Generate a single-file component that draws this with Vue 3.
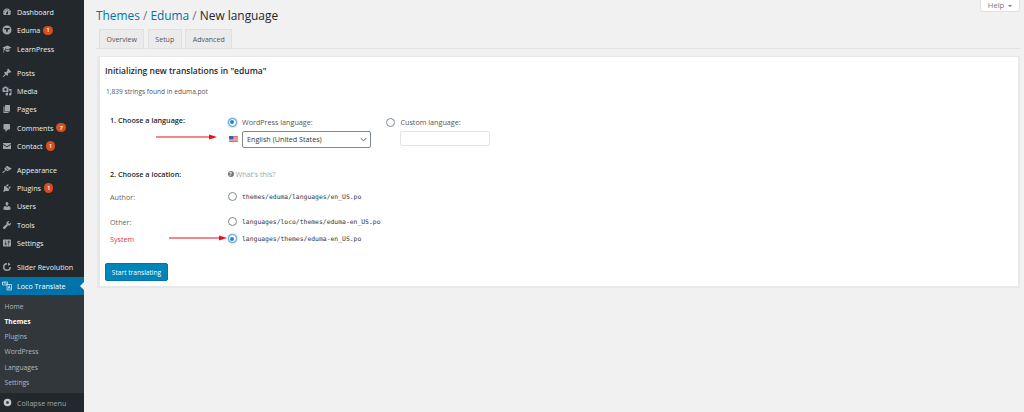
<script setup>
const P = {
  dash: 'M3.76 16h12.48c1.1-1.37 1.76-3.11 1.76-5 0-4.42-3.58-8-8-8s-8 3.58-8 8c0 1.89.66 3.63 1.76 5zM10 4c.55 0 1 .45 1 1s-.45 1-1 1-1-.45-1-1 .45-1 1-1zM6 6c.55 0 1 .45 1 1s-.45 1-1 1-1-.45-1-1 .45-1 1-1zm8 0c.55 0 1 .45 1 1s-.45 1-1 1-1-.45-1-1 .45-1 1-1zm-5.37 5.55L12 7v6c0 1.1-.9 2-2 2s-2-.9-2-2c0-.57.24-1.08.63-1.45zM4 10c.55 0 1 .45 1 1s-.45 1-1 1-1-.45-1-1 .45-1 1-1zm12 0c.55 0 1 .45 1 1s-.45 1-1 1-1-.45-1-1 .45-1 1-1z',
  eduma: 'M10 1a9 9 0 1 0 0 18 9 9 0 0 0 0-18zM4 6h12l-1 3h-3l-1 5-2 1-1-6H5z',
  learn: 'M1 7l10-4 8 4-8 4-5-2.3V12l-2 1 .4 4H2.6L3 13V8zM7 10.5l4 2 4-2V14c-2 2-6 2-8 0z',
  post: 'M10.44 3.02l1.82-1.82 6.36 6.35-1.83 1.82c-1.05-.68-2.48-.57-3.41.36l-.75.75c-.92.93-1.04 2.35-.35 3.41l-1.83 1.82-2.41-2.41-2.8 2.79c-.42.42-3.38 2.71-3.8 2.29s1.86-3.39 2.28-3.81l2.79-2.79L4.1 9.36l1.83-1.82c1.05.69 2.48.57 3.4-.36l.75-.75c.93-.92 1.05-2.35.36-3.41z',
  media: 'M13 11V4c0-.55-.45-1-1-1h-1.67L9 1H5L3.67 3H2c-.55 0-1 .45-1 1v7c0 .55.45 1 1 1h10c.55 0 1-.45 1-1zM7 4.5c1.38 0 2.5 1.12 2.5 2.5S8.38 9.5 7 9.5 4.5 8.38 4.5 7 5.62 4.5 7 4.5zM14 6h5v10.5c0 1.38-1.12 2.5-2.5 2.5S14 17.88 14 16.5s1.12-2.5 2.5-2.5c.17 0 .34.02.5.05V9h-3V6zm-4 8.05V13h2v3.5c0 1.38-1.12 2.5-2.5 2.5S7 17.88 7 16.5 8.12 14 9.5 14c.17 0 .34.02.5.05z',
  page: 'M6 15V2h10v13H6zm-1 1h8v2H3V5h2v11z',
  comment: 'M5 2h9c1.1 0 2 .9 2 2v7c0 1.1-.9 2-2 2h-2l-5 5v-5H5c-1.1 0-2-.9-2-2V4c0-1.1.9-2 2-2z',
  mail: 'M2 4h16v1.8l-8 4.7-8-4.7zM2 7.6l8 4.7 8-4.7V16H2z',
  brush: 'M14.48 11.06L7.41 3.99l1.5-1.5c.5-.56 2.3-.47 3.51.32 1.21.8 1.43 1.28 2.91 2.1 1.18.64 2.45 1.26 4.45.85zm-.71.71L6.7 4.7 4.93 6.47c-.39.39-.39 1.02 0 1.41l1.06 1.06c.39.39.39 1.03 0 1.42-.6.6-1.43 1.11-2.21 1.69-.35.26-.7.53-1.01.84C1.43 13.23.4 14.84 1.19 15.63c.79.79 2.4-.24 3.76-1.61.31-.31.58-.66.85-1.02.57-.78 1.08-1.6 1.69-2.21.39-.39 1.02-.39 1.41 0l1.06 1.06c.39.39 1.02.39 1.41 0z',
  plug: 'M13.11 4.36L9.87 7.6 8 5.73l3.24-3.24c.35-.34 1.05-.2 1.56.32.52.51.66 1.21.31 1.55zm-8 1.77l.91-1.12 9.01 9.01-1.19.84c-.71.71-2.63 1.16-3.82 1.16H6.14L4.9 17.26c-.59.59-1.54.59-2.12 0-.59-.58-.59-1.53 0-2.12l1.24-1.24v-3.88c0-1.13.4-3.19 1.09-3.89zm7.26 3.97l3.24-3.24c.34-.35 1.04-.21 1.55.31.52.51.66 1.21.31 1.55l-3.24 3.25z',
  user: 'M10 9.25c-2.27 0-2.73-3.44-2.73-3.44C7 4.02 7.82 2 9.97 2c2.16 0 2.98 2.02 2.71 3.81 0 0-.41 3.44-2.68 3.44zm0 2.57L12.72 10c2.39 0 4.52 2.33 4.52 4.53v2.49s-3.65 1.13-7.24 1.13c-3.65 0-7.24-1.13-7.24-1.13v-2.49c0-2.25 1.94-4.48 4.47-4.48z',
  tool: 'M16.68 9.77c-1.34 1.34-3.3 1.67-4.95.99l-5.41 6.52c-.99.99-2.59.99-3.58 0s-.99-2.59 0-3.57l6.52-5.42c-.68-1.65-.35-3.61.99-4.95 1.28-1.28 3.12-1.62 4.72-1.06l-2.89 2.89 2.82 2.82 2.86-2.87c.53 1.58.18 3.39-1.08 4.65z',
  set: 'M18 16V4c0-.55-.45-1-1-1H3c-.55 0-1 .45-1 1v12c0 .55.45 1 1 1h14c.55 0 1-.45 1-1zM8 11h1c.55 0 1 .45 1 1s-.45 1-1 1H8v1.5c0 .28-.22.5-.5.5s-.5-.22-.5-.5V13H6c-.55 0-1-.45-1-1s.45-1 1-1h1V5.5c0-.28.22-.5.5-.5s.5.22.5.5V11zm5-2h-1c-.55 0-1-.45-1-1s.45-1 1-1h1V5.5c0-.28.22-.5.5-.5s.5.22.5.5V7h1c.55 0 1 .45 1 1s-.45 1-1 1h-1v5.5c0 .28-.22.5-.5.5s-.5-.22-.5-.5V9z',
  slider: 'M10 2a8 8 0 1 0 8 8h-3a5 5 0 1 1-5-5V2zM12 1l5 3.5-5 3.5z',
  loco: 'M1 2h10v3h-1.5v3H1zM3 4h5M5.5 3v1M10 7h9v11h-9zM12.5 15.5l2-6 2 6M13 13.5h3',
  collapse: 'M10 1.5a8.5 8.5 0 1 0 0 17 8.5 8.5 0 0 0 0-17zm0 5.5a3 3 0 1 1 0 6 3 3 0 0 1 0-6z'
}
const groups = [
  [{ t: 'Dashboard', i: 'dash' }, { t: 'Eduma', i: 'eduma', b: 1 }, { t: 'LearnPress', i: 'learn' }],
  [{ t: 'Posts', i: 'post' }, { t: 'Media', i: 'media' }, { t: 'Pages', i: 'page' }, { t: 'Comments', i: 'comment', b: 7 }, { t: 'Contact', i: 'mail', b: 1 }],
  [{ t: 'Appearance', i: 'brush' }, { t: 'Plugins', i: 'plug', b: 1 }, { t: 'Users', i: 'user' }, { t: 'Tools', i: 'tool' }, { t: 'Settings', i: 'set' }],
  [{ t: 'Slider Revolution', i: 'slider' }]
]
const subs = ['Home', 'Themes', 'Plugins', 'WordPress', 'Languages', 'Settings']
</script>

<template>
  <div class="page">
    <aside class="side">
      <ul v-for="(g, n) in groups" :key="n" class="group">
        <li v-for="m in g" :key="m.t" class="item">
          <svg class="ico" viewBox="0 0 20 20"><path :d="P[m.i]" fill-rule="evenodd" /></svg>
          <span>{{ m.t }}</span>
          <b v-if="m.b" class="badge">{{ m.b }}</b>
        </li>
      </ul>
      <div class="item active">
        <svg class="ico" viewBox="0 0 20 20"><path :d="P.loco" fill-rule="evenodd" /></svg>
        <span>Loco Translate</span>
      </div>
      <ul class="subs">
        <li v-for="s in subs" :key="s" :class="{ cur: s === 'Themes' }">{{ s }}</li>
      </ul>
      <div class="item collapse">
        <svg class="ico" viewBox="0 0 20 20"><path :d="P.collapse" fill-rule="evenodd" /></svg>
        <span>Collapse menu</span>
      </div>
    </aside>

    <main class="main">
      <div class="help">Help <i class="caret"></i></div>
      <h1 class="crumb"><a>Themes</a> <s>/</s> <a>Eduma</a> <s>/</s> New language</h1>
      <nav class="tabs">
        <span class="tab">Overview</span>
        <span class="tab">Setup</span>
        <span class="tab">Advanced</span>
      </nav>

      <section class="card">
        <h2>Initializing new translations in "eduma"</h2>
        <p class="count">1,839 strings found in eduma.pot</p>

        <div class="row lang">
          <strong class="lbl">1. Choose a language:</strong>
          <div class="wp">
            <label class="opt"><i class="radio on"></i>WordPress language:</label>
            <div class="selrow">
              <svg class="flag" viewBox="0 0 19 13">
                <rect width="19" height="13" fill="#d9636a" />
                <path d="M0 2.5h19M0 5h19M0 7.5h19M0 10h19" stroke="#f1e3e4" stroke-width="1.1" />
                <rect width="9" height="7" fill="#3f5f9e" />
              </svg>
              <div class="select">English (United States)
                <svg viewBox="0 0 10 6" class="chev"><path d="M1 1l4 4 4-4" fill="none" stroke="#555" stroke-width="1.4" /></svg>
              </div>
            </div>
          </div>
          <div class="custom">
            <label class="opt"><i class="radio"></i>Custom language:</label>
            <div class="input"></div>
          </div>
        </div>

        <div class="row loc">
          <strong class="lbl">2. Choose a location:</strong>
          <span class="what"><i class="q">?</i> What's this?</span>
        </div>

        <div class="row path author">
          <span class="lbl plain">Author:</span>
          <label class="opt"><i class="radio"></i><code>themes/eduma/languages/en_US.po</code></label>
        </div>
        <div class="row path other">
          <span class="lbl plain">Other:</span>
          <label class="opt"><i class="radio"></i><code>languages/loco/themes/eduma-en_US.po</code></label>
        </div>
        <div class="row path system">
          <span class="lbl red">System</span>
          <label class="opt"><i class="radio on"></i><code>languages/themes/eduma-en_US.po</code></label>
        </div>

        <button class="btn">Start translating</button>

        <svg class="arrow a1" viewBox="0 0 61 6"><path d="M0 3h53" stroke="#e8101c" stroke-width="1.2" /><path d="M53 .5L61 3l-8 2.5z" fill="#e8101c" /></svg>
        <svg class="arrow a2" viewBox="0 0 58 6"><path d="M0 3h50" stroke="#e8101c" stroke-width="1.2" /><path d="M50 .5L58 3l-8 2.5z" fill="#e8101c" /></svg>
      </section>
    </main>
  </div>
</template>

<style scoped>
.page { display: flex; width: 1024px; height: 412px; overflow: hidden; background: #f1f1f1; font-family: "Open Sans", sans-serif; color: #444; }
ul { list-style: none; margin: 0; padding: 0; }

.side { width: 84px; flex: none; height: 412px; background: #23282d; padding-top: 3px; box-sizing: border-box; display: flex; flex-direction: column; overflow: hidden; }
.side > * { flex: none; }
.group { margin-bottom: 5.7px; }
.item { height: 18.3px; display: flex; align-items: center; font-size: 7.15px; color: #eee; white-space: nowrap; }
.ico { width: 10px; height: 10px; margin: 0 5px 0 2px; flex: none; fill: #a0a5aa; }
.badge { width: 9.5px; height: 9.5px; border-radius: 50%; background: #d54e21; color: #fff; font-size: 6px; font-weight: 600; margin-left: 3px; display: flex; align-items: center; justify-content: center; }
.active { background: #0073aa; color: #fff; position: relative; margin-top: -5px; }
.active .ico { fill: none; stroke: #fff; stroke-width: 1.3; }
.active::after { content: ""; position: absolute; right: 0; top: 5px; border: 4.5px solid transparent; border-right-color: #f1f1f1; border-left: 0; }
.subs { background: #32373c; padding: 4px 0 3px 4.5px; font-size: 6.7px; color: #b4b9be; }
.subs li { height: 15.1px; line-height: 15.1px; }
.cur { color: #fff; font-weight: 700; }
.collapse { color: #a0a5aa; height: 20px; }
.collapse .ico { margin-left: 3px; margin-right: 5px; fill: #c3c5c8; width: 9px; height: 9px; }

.main { flex: 1; position: relative; padding: 0 4px 0 12px; min-width: 0; }
.help { position: absolute; right: 4px; top: -1px; width: 40px; height: 13px; box-sizing: border-box; background: #fff; border: 1px solid #e1e1e1; border-radius: 0 0 3px 3px; font-size: 7.6px; color: #72777c; text-align: center; line-height: 11px; }
.caret { display: inline-block; margin-left: 2px; border: 2.5px solid transparent; border-top-color: #72777c; border-bottom: 0; vertical-align: 1px; }
.crumb { margin: 0; height: 29px; line-height: 30px; font-size: 11.9px; font-weight: 400; color: #23282d; white-space: nowrap; }
.crumb a { color: #0073aa; }
.crumb s { text-decoration: none; color: #72777c; }
.tabs { display: flex; gap: 3.5px; padding-left: 3px; height: 20px; box-sizing: border-box; border-bottom: 1px solid #e2e2e2; }
.tab { height: 20px; box-sizing: border-box; padding: 0 6.5px; background: #ebebeb; border: 1px solid #e0e0e0; font-size: 7px; color: #555; line-height: 19px; }

.card { position: relative; margin: 7px 0 0 1px; width: 923px; height: 232px; box-sizing: border-box; background: #fff; border: 1px solid #e8e8e8; border-width: 1px 2px 2px 3px; padding: 0 0 0 5px; }
.card h2 { margin: 0; padding-top: 7px; font-size: 8.5px; line-height: 13px; font-weight: 600; color: #23282d; }
.count { margin: 7.5px 0 0 1px; font-size: 6.6px; line-height: 13px; color: #555; }
.row { display: flex; margin-left: 5px; font-size: 7.2px; }
.lbl { width: 117.5px; flex: none; color: #23282d; font-weight: 600; line-height: 12px; }
.lbl.plain { font-weight: 400; color: #666; }
.lbl.red { font-weight: 400; color: #e8323c; }
.lang { margin-top: 16.2px; height: 54px; }
.wp { width: 158.5px; flex: none; padding-top: 2.5px; }
.custom { padding-top: 2.5px; }
.opt { display: flex; align-items: center; height: 12px; color: #555; font-size: 7.2px; white-space: nowrap; }
.radio { width: 9px; height: 9px; box-sizing: border-box; border: 1px solid #7e8993; border-radius: 50%; background: #fff; margin-right: 5.5px; flex: none; position: relative; }
.radio.on { border-color: #5b9dd9; box-shadow: 0 0 2px #5b9dd9; }
.radio.on::after { content: ""; position: absolute; inset: 1.5px; border-radius: 50%; background: #1e8cbe; }
.selrow { display: flex; align-items: center; margin-top: 2.5px; }
.flag { width: 9px; height: 6px; flex: none; margin: 0 4px 0 1.5px; }
.select { position: relative; width: 129px; height: 17px; box-sizing: border-box; border: 1px solid #7e8993; border-radius: 2px; background: #fff; font-size: 7.2px; color: #32373c; line-height: 15px; padding-left: 4px; }
.chev { position: absolute; right: 3px; top: 5px; width: 7px; height: 5px; }
.custom .input { width: 90px; height: 15px; box-sizing: border-box; margin: 3px 0 0 13.5px; border: 1px solid #e5e5e5; border-radius: 2px; background: #fff; }
.loc { line-height: 12px; }
.what { color: #a0a5aa; font-size: 7.2px; display: flex; align-items: center; gap: 2px; }
.q { width: 6px; height: 6px; border-radius: 50%; background: #72777c; color: #fff; font-size: 5px; line-height: 6px; text-align: center; font-style: normal; font-weight: 700; }
code { font-family: "DejaVu Sans Mono", monospace; font-size: 6.4px; color: #32373c; }
.author { margin-top: 11px; }
.other { margin-top: 13px; }
.system { margin-top: 5px; }
.btn { display: block; margin-top: 18.8px; width: 63px; height: 18px; padding: 0; font: 400 6.6px "Open Sans", sans-serif; color: #fff; background: #0085ba; border: 1px solid #0073aa; border-radius: 2px; }
.arrow { position: absolute; height: 6px; }
.a1 { left: 56px; top: 77px; width: 61px; }
.a2 { left: 69px; top: 178px; width: 58px; }
</style>
